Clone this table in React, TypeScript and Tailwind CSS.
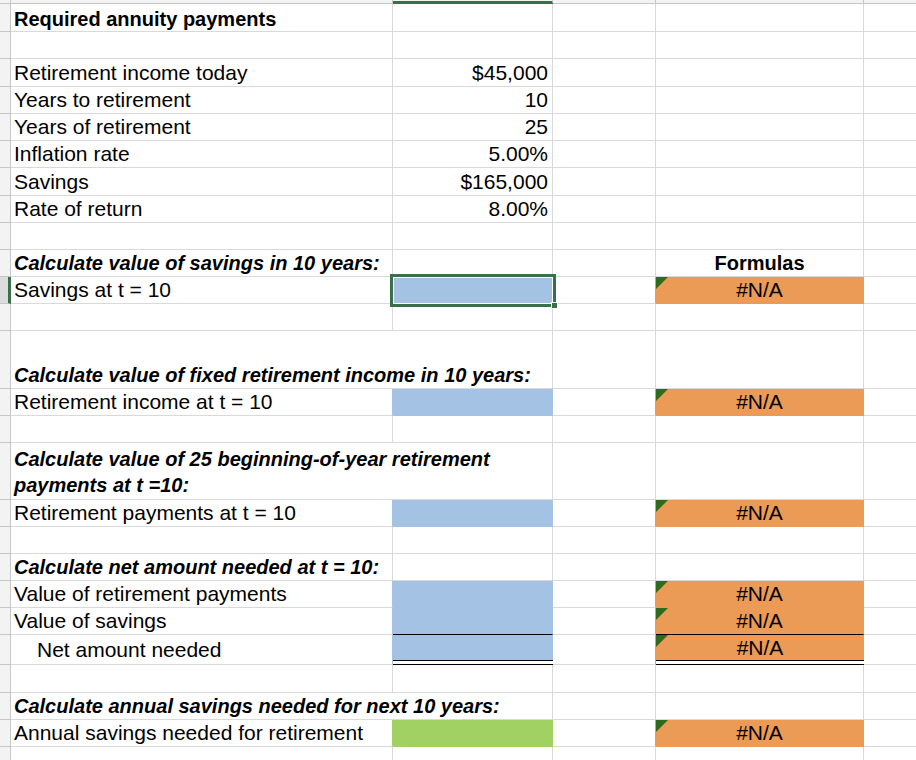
import React from "react";

const W = {
  a: "w-[382px]",
  b: "w-[160px]",
  c: "w-[103px]",
  d: "w-[208px]",
  e: "flex-1",
};

const R_GRAY = "border-r border-r-[#d9d9d9]";
const B_GRAY = "border-b border-b-[#d9d9d9]";
const R_BLUE = "border-r border-r-[#a4c2e4]";
const B_BLUE = "border-b border-b-[#a4c2e4]";
const R_OR = "border-r border-r-[#eb9b56]";
const B_OR = "border-b border-b-[#eb9b56]";
const R_GR = "border-r border-r-[#a1d063]";
const B_GR = "border-b border-b-[#a1d063]";
const B_BLACK = "border-b border-b-black";

const REG = "text-[21px] leading-[24px] pb-[1px] whitespace-nowrap";
const HEAD = "text-[20px] leading-[24px] font-bold whitespace-nowrap";
const ITAL = "text-[20px] leading-[24px] font-bold italic pb-[1px] whitespace-nowrap";

type CellProps = {
  w: string;
  r?: string;
  b?: string;
  cls?: string;
  children?: React.ReactNode;
};

function Cell({ w, r = R_GRAY, b = B_GRAY, cls = "", children }: CellProps) {
  return <div className={`${w} ${r} ${b} ${cls} shrink-0 flex items-end`}>{children}</div>;
}

function Row({ h, sel = false, children }: { h: string; sel?: boolean; children?: React.ReactNode }) {
  return (
    <div className={`flex ${h}`}>
      <div
        className={
          sel
            ? "w-[11px] shrink-0 bg-[#dcdcdc] border-r-[3px] border-r-[#3a7049] border-b border-b-[#c6c6c6]"
            : "w-[11px] shrink-0 bg-[#f3f3f3] border-r border-r-[#c6c6c6] border-b border-b-[#c6c6c6]"
        }
      />
      {children}
    </div>
  );
}

function Tri() {
  return (
    <span className="absolute left-0 top-0 w-0 h-0 border-t-[12px] border-t-[#2e6b1f] border-r-[12px] border-r-transparent" />
  );
}

function Orange({ b = B_OR }: { b?: string }) {
  return (
    <Cell w={W.d} r={R_OR} b={b} cls="bg-[#eb9b56] relative justify-center">
      <Tri />
      <span className={REG}>#N/A</span>
    </Cell>
  );
}

function Blue({ b = B_BLUE }: { b?: string }) {
  return <Cell w={W.b} r={R_BLUE} b={b} cls="bg-[#a4c2e4]" />;
}

function Empty() {
  return (
    <>
      <Cell w={W.b} />
      <Cell w={W.c} />
      <Cell w={W.d} />
      <Cell w={W.e} r="" />
    </>
  );
}

function Label({ text, r = R_GRAY, cls = "pl-[3px]" }: { text: string; r?: string; cls?: string }) {
  return (
    <Cell w={W.a} r={r}>
      <span className={`${REG} ${cls}`}>{text}</span>
    </Cell>
  );
}

function Input({ label, value, h = "h-[27px]" }: { label: string; value: string; h?: string }) {
  return (
    <Row h={h}>
      <Label text={label} />
      <Cell w={W.b} cls="justify-end">
        <span className={`${REG} pr-[4px]`}>{value}</span>
      </Cell>
      <Cell w={W.c} />
      <Cell w={W.d} />
      <Cell w={W.e} r="" />
    </Row>
  );
}

function Blank({ h = "h-[27px]" }: { h?: string }) {
  return (
    <Row h={h}>
      <Cell w={W.a} />
      <Empty />
    </Row>
  );
}

function ResultRow({ label, fill = "blue", bB, dB }: { label: string; fill?: "blue" | "green"; bB?: string; dB?: string }) {
  return (
    <Row h="h-[27px]">
      <Label text={label} r={fill === "blue" ? R_BLUE : R_GR} />
      {fill === "blue" ? <Blue b={bB} /> : <Cell w={W.b} r={R_GR} b={B_GR} cls="bg-[#a1d063]" />}
      <Cell w={W.c} r={R_OR} />
      <Orange b={dB} />
      <Cell w={W.e} r="" />
    </Row>
  );
}

function HeadRow({ text, h = "h-[27px]", overflow = false }: { text: string; h?: string; overflow?: boolean }) {
  return (
    <Row h={h}>
      <Cell w={W.a} r={overflow ? "" : R_GRAY} cls="overflow-visible">
        <span className={`${ITAL} pl-[3px]`}>{text}</span>
      </Cell>
      <Empty />
    </Row>
  );
}

function DoubleCell({ w, bg, children }: { w: string; bg: string; children?: React.ReactNode }) {
  return (
    <div className={`${w} shrink-0 flex flex-col`}>
      <div className={`flex-1 ${bg} relative flex items-end justify-center`}>{children}</div>
      <div className="h-px bg-black" />
      <div className="h-[3px]" />
      <div className="h-px bg-black" />
    </div>
  );
}

export default function App() {
  return (
    <div className="w-full h-screen overflow-hidden bg-white text-black font-['Liberation_Sans',Arial,sans-serif]">
      {/* column header remnant */}
      <div className="flex h-[4px]">
        <div className="w-[11px] shrink-0 bg-[#f3f3f3] border-r border-r-[#c6c6c6] border-b border-b-[#c6c6c6]" />
        <div className="w-[382px] shrink-0 bg-[#f3f3f3] border-r border-r-[#c6c6c6] border-b border-b-[#c6c6c6]" />
        <div className="w-[160px] shrink-0 bg-[#f3f3f3] border-r border-r-[#c6c6c6] border-b-[3px] border-b-[#3a7049]" />
        <div className="w-[103px] shrink-0 bg-[#f3f3f3] border-r border-r-[#c6c6c6] border-b border-b-[#c6c6c6]" />
        <div className="w-[208px] shrink-0 bg-[#f3f3f3] border-r border-r-[#c6c6c6] border-b border-b-[#c6c6c6]" />
        <div className="flex-1 bg-[#f3f3f3] border-b border-b-[#c6c6c6]" />
      </div>

      <Row h="h-[28px]">
        <Cell w={W.a}>
          <span className={`${HEAD} pl-[3px]`}>Required annuity payments</span>
        </Cell>
        <Empty />
      </Row>
      <Blank />
      <Input label="Retirement income today" value="$45,000" h="h-[28px]" />
      <Input label="Years to retirement" value="10" />
      <Input label="Years of retirement" value="25" />
      <Input label="Inflation rate" value="5.00%" />
      <Input label="Savings" value="$165,000" h="h-[28px]" />
      <Input label="Rate of return" value="8.00%" />
      <Blank />

      <Row h="h-[27px]">
        <Cell w={W.a}>
          <span className={`${ITAL} pl-[3px]`}>Calculate value of savings in 10 years:</span>
        </Cell>
        <Cell w={W.b} />
        <Cell w={W.c} />
        <Cell w={W.d} cls="justify-center">
          <span className={`${HEAD} pb-[1px]`}>Formulas</span>
        </Cell>
        <Cell w={W.e} r="" />
      </Row>

      <Row h="h-[27px]" sel>
        <Label text="Savings at t = 10" />
        <div className="w-[160px] shrink-0 relative z-10 bg-[#a4c2e4] outline-[3px] outline-solid outline-[#3a7049] shadow-[inset_0_0_0_1px_#ffffff]">
          <span className="absolute -right-[5px] -bottom-[5px] w-[7px] h-[7px] bg-[#3a7049] border border-white" />
        </div>
        <Cell w={W.c} r={R_OR} />
        <Orange />
        <Cell w={W.e} r="" />
      </Row>

      <Blank />
      <HeadRow text="Calculate value of fixed retirement income in 10 years:" h="h-[58px]" overflow />
      <ResultRow label="Retirement income at t = 10" />
      <Blank />

      <Row h="h-[57px]">
        <Cell w="w-[542px]">
          <span className="text-[20px] leading-[26px] font-bold italic pb-[1px] pl-[3px] pr-[4px]">
            Calculate value of 25 beginning-of-year retirement payments at t =10:
          </span>
        </Cell>
        <Cell w={W.c} />
        <Cell w={W.d} />
        <Cell w={W.e} r="" />
      </Row>

      <ResultRow label="Retirement payments at t = 10" />
      <Blank />
      <HeadRow text="Calculate net amount needed at t = 10:" />
      <ResultRow label="Value of retirement payments" />
      <ResultRow label="Value of savings" bB={B_BLACK} dB={B_BLACK} />

      <Row h="h-[30px]">
        <Cell w={W.a} r={R_BLUE}>
          <span className="text-[21px] leading-[24px] pb-[2px] pl-[26px] whitespace-nowrap">Net amount needed</span>
        </Cell>
        <DoubleCell w={W.b} bg="bg-[#a4c2e4]" />
        <Cell w={W.c} r={R_OR} />
        <DoubleCell w={W.d} bg="bg-[#eb9b56]">
          <Tri />
          <span className="text-[21px] leading-[24px] whitespace-nowrap">#N/A</span>
        </DoubleCell>
        <Cell w={W.e} r="" />
      </Row>

      <Blank h="h-[28px]" />
      <HeadRow text="Calculate annual savings needed for next 10 years:" overflow />
      <ResultRow label="Annual savings needed for retirement" fill="green" />
      <Blank />
    </div>
  );
}
